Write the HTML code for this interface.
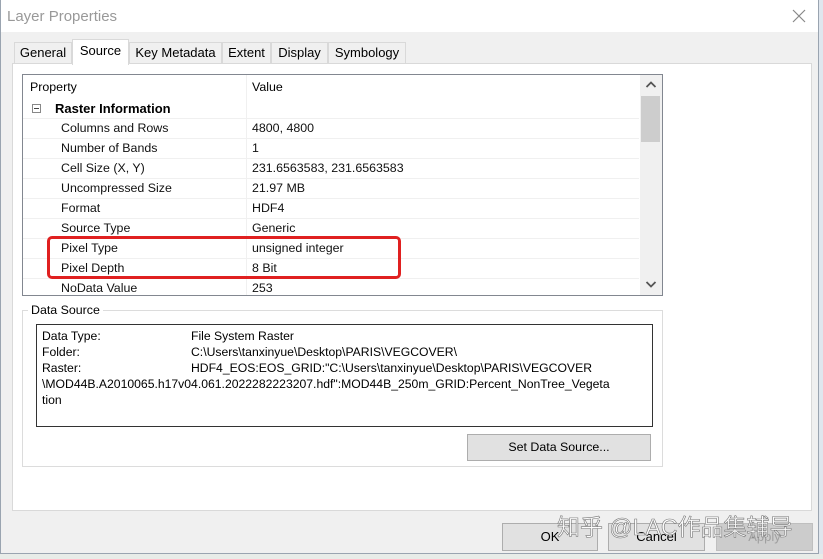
<!DOCTYPE html>
<html><head><style>
*{box-sizing:border-box;margin:0;padding:0}
body{width:823px;height:559px;overflow:hidden;background:#f0f0f0;font-family:"Liberation Sans",sans-serif;font-size:12px;color:#000;position:relative}
.a{position:absolute}
.tab{position:absolute;top:42px;height:21px;background:#f0f0f0;border:1px solid #d9d9d9;border-bottom:none;font-size:13px;text-align:center;line-height:20px;color:#000}
.row{position:absolute;left:23px;width:616px;height:20px;border-bottom:1px solid #f0f0f0;font-size:12.4px;line-height:19px;color:#111}
.row span{position:absolute}
.btn{position:absolute;height:28px;border:1px solid #adadad;background:#e1e1e1;text-align:center;line-height:26px;font-size:13px}
</style></head><body>
<div class="a" style="left:819px;top:0;width:4px;height:559px;background:#dfe6ee"></div>
<div class="a" style="left:0;top:554px;width:823px;height:5px;background:#e8ece8"></div>
<div class="a" style="left:0;top:0;width:819px;height:554px;background:#f0f0f0;border:1px solid #9aa4b0;border-top:none"></div>
<div class="a" style="left:1px;top:0;width:817px;height:32px;background:#fff"></div>
<div class="a" style="left:7px;top:8px;font-size:15px;color:#999">Layer Properties</div>
<svg class="a" style="left:792px;top:9px" width="14" height="14"><path d="M1 1L13 13M13 1L1 13" stroke="#888" stroke-width="1.2"/></svg>
<div class="tab" style="left:14px;width:58px">General</div>
<div class="tab" style="left:129px;width:93px">Key Metadata</div>
<div class="tab" style="left:222px;width:49px">Extent</div>
<div class="tab" style="left:271px;width:57px">Display</div>
<div class="tab" style="left:328px;width:78px">Symbology</div>
<div class="a" style="left:12px;top:63px;width:800px;height:448px;background:#fff;border:1px solid #d9d9d9"></div>
<div class="tab" style="left:72px;width:57px;top:39px;height:26px;background:#fff;border-color:#d9d9d9;line-height:22px">Source</div>
<div class="a" style="left:22px;top:74px;width:641px;height:222px;border:1px solid #828790;background:#fff"></div>
<div class="a" style="left:246px;top:75px;width:1px;height:220px;background:#f0f0f0"></div>
<div class="a" style="left:30px;top:80px;font-size:12.4px">Property</div>
<div class="a" style="left:252px;top:80px;font-size:12.4px">Value</div>
<div class="a" style="left:32px;top:104px;width:9px;height:9px;border:1px solid #888"></div>
<div class="a" style="left:34px;top:108px;width:5px;height:1px;background:#444"></div>
<div class="a" style="left:55px;top:101px;font-weight:bold;font-size:13px">Raster Information</div>
<div class="row" style="top:99px"></div>
<div class="row" style="top:119px"><span style="left:38px">Columns and Rows</span><span style="left:229px">4800, 4800</span></div>
<div class="row" style="top:139px"><span style="left:38px">Number of Bands</span><span style="left:229px">1</span></div>
<div class="row" style="top:159px"><span style="left:38px">Cell Size (X, Y)</span><span style="left:229px">231.6563583, 231.6563583</span></div>
<div class="row" style="top:179px"><span style="left:38px">Uncompressed Size</span><span style="left:229px">21.97 MB</span></div>
<div class="row" style="top:199px"><span style="left:38px">Format</span><span style="left:229px">HDF4</span></div>
<div class="row" style="top:219px"><span style="left:38px">Source Type</span><span style="left:229px">Generic</span></div>
<div class="row" style="top:239px"><span style="left:38px">Pixel Type</span><span style="left:229px">unsigned integer</span></div>
<div class="row" style="top:259px"><span style="left:38px">Pixel Depth</span><span style="left:229px">8 Bit</span></div>
<div class="row" style="top:279px;height:16px;border:none"><span style="left:38px">NoData Value</span><span style="left:229px">253</span></div>
<div class="a" style="left:640px;top:75px;width:22px;height:220px;background:#f0f0f0"></div>
<div class="a" style="left:641px;top:96px;width:19px;height:46px;background:#cdcdcd"></div>
<svg class="a" style="left:645px;top:81px" width="12" height="8"><path d="M1.5 6L6 1.5L10.5 6" stroke="#555" stroke-width="1.8" fill="none"/></svg>
<svg class="a" style="left:645px;top:280px" width="12" height="8"><path d="M1.5 2L6 6.5L10.5 2" stroke="#555" stroke-width="1.8" fill="none"/></svg>
<div class="a" style="left:47px;top:236px;width:354px;height:43px;border:3px solid #e02020;border-radius:5px"></div>
<div class="a" style="left:22px;top:310px;width:641px;height:157px;border:1px solid #dcdcdc"></div>
<div class="a" style="left:28px;top:303px;background:#fff;padding:0 3px;font-size:12.4px">Data Source</div>
<div class="a" style="left:36px;top:324px;width:617px;height:103px;border:1px solid #333;background:#fff;font-size:12.2px;line-height:16px;padding:3px 5px">
<div style="position:relative;height:16px">Data Type:<span style="position:absolute;left:149px">File System Raster</span></div>
<div style="position:relative;height:16px">Folder:<span style="position:absolute;left:149px">C:\Users\tanxinyue\Desktop\PARIS\VEGCOVER\</span></div>
<div style="position:relative;height:16px">Raster:<span style="position:absolute;left:149px;white-space:nowrap">HDF4_EOS:EOS_GRID:"C:\Users\tanxinyue\Desktop\PARIS\VEGCOVER</span></div>
<div style="white-space:nowrap">\MOD44B.A2010065.h17v04.061.2022282223207.hdf":MOD44B_250m_GRID:Percent_NonTree_Vegeta</div>
<div>tion</div>
</div>
<div class="btn" style="left:467px;top:434px;width:184px;height:27px;font-size:12.4px;line-height:25px">Set Data Source...</div>
<div class="btn" style="left:502px;top:523px;width:96px">OK</div>
<div class="btn" style="left:608px;top:523px;width:97px">Cancel</div>
<div class="btn" style="left:716px;top:523px;width:97px;background:#cccccc;border-color:#bfbfbf;color:#a0a0a0">Apply</div>
<div class="a" style="left:557px;top:508px;font-size:23px;color:rgba(255,255,255,0.9);font-family:'Liberation Sans','Noto Sans CJK SC',sans-serif;-webkit-text-stroke:0.6px #777">知乎 @LAC作品集辅导</div>
</body></html>
